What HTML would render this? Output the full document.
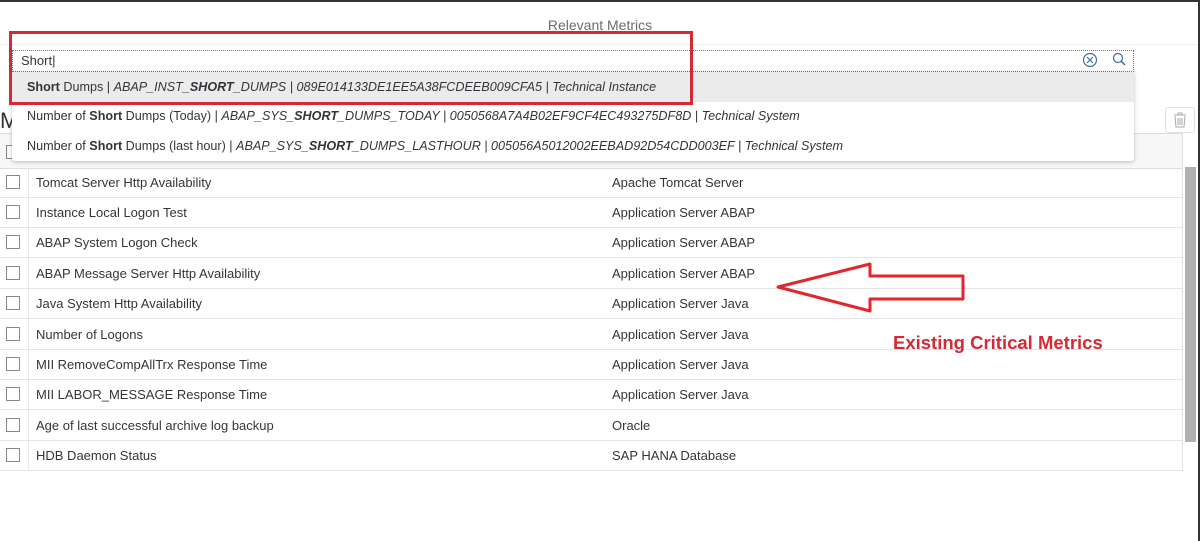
<!DOCTYPE html>
<html><head><style>
body{margin:0;width:1200px;height:541px;background:#fff;position:relative;overflow:hidden;font-family:"Liberation Sans",Arial,sans-serif;color:#32363a;}
.a{position:absolute;}
.row{position:absolute;left:0;width:1182px;height:30px;border-bottom:1px solid #e5e5e5;font-size:13px;}
.row .cb{position:absolute;left:6px;top:8px;width:12px;height:12px;border:1px solid #888;background:#fff;}
.row .t1{position:absolute;left:36px;top:8px;}
.row .t2{position:absolute;left:612px;top:8px;}
.sg{position:absolute;left:12px;width:1122px;height:30px;font-size:12.6px;line-height:30px;}
.sg span{position:absolute;left:15px;white-space:nowrap;}
i{font-style:italic}
</style></head><body>
<div class="a" style="left:0;top:0;width:1200px;height:2px;background:#333"></div>
<div class="a" style="right:0;top:0;width:2px;height:541px;background:#333"></div>
<div class="a" style="left:0;top:17px;width:1200px;text-align:center;font-size:14px;color:#6a6d70;">Relevant Metrics</div>
<div class="a" style="left:0;top:44px;width:1196px;height:1px;background:#eee"></div>
<div class="a" style="left:12px;top:50px;width:1120px;height:20px;border:1px dotted #777;background:#fff;font-size:13px;line-height:20px;"><span style="padding-left:8px">Short|</span></div>
<svg class="a" style="left:1080px;top:52px" width="60" height="18"><circle cx="10" cy="8" r="6.5" fill="none" stroke="#3a6ea5" stroke-width="1.2"/><path d="M7 5L13 11M13 5L7 11" stroke="#3a6ea5" stroke-width="1.2"/><circle cx="38" cy="6" r="4.5" fill="none" stroke="#3a6ea5" stroke-width="1.2"/><path d="M41 9L45 13" stroke="#3a6ea5" stroke-width="1.5"/></svg>
<div class="a" style="left:0;top:108px;font-size:22px;color:#333">M</div>
<div class="a" style="left:1165px;top:107px;width:28px;height:24px;border:1px solid #e0e0e0;border-radius:3px;"><svg width="28" height="24"><path d="M8 7H20M12 7V5H16V7M9 8L10 19H18L19 8M12 10V17M14 10V17M16 10V17" fill="none" stroke="#aaa" stroke-width="1"/></svg></div>
<div class="a" style="left:0;top:133px;width:1182px;height:34px;background:#f7f7f7;border-top:1px solid #ddd;border-bottom:1px solid #ddd"></div>
<div class="a" style="left:6px;top:145px;width:12px;height:12px;border:1px solid #888;background:#fff"></div>
<div class="a" style="left:1182px;top:133px;width:1px;height:338px;background:#e0e0e0"></div>
<div class="a" style="left:28px;top:167px;width:1px;height:304px;background:#e8e8e8"></div>
<div class="a" style="left:1185px;top:167px;width:11px;height:275px;background:#b0b0b0"></div>
<div class="row" style="top:167px"><div class="cb"></div><div class="t1">Tomcat Server Http Availability</div><div class="t2">Apache Tomcat Server</div></div>
<div class="row" style="top:197px"><div class="cb"></div><div class="t1">Instance Local Logon Test</div><div class="t2">Application Server ABAP</div></div>
<div class="row" style="top:227px"><div class="cb"></div><div class="t1">ABAP System Logon Check</div><div class="t2">Application Server ABAP</div></div>
<div class="row" style="top:258px"><div class="cb"></div><div class="t1">ABAP Message Server Http Availability</div><div class="t2">Application Server ABAP</div></div>
<div class="row" style="top:288px"><div class="cb"></div><div class="t1">Java System Http Availability</div><div class="t2">Application Server Java</div></div>
<div class="row" style="top:319px"><div class="cb"></div><div class="t1">Number of Logons</div><div class="t2">Application Server Java</div></div>
<div class="row" style="top:349px"><div class="cb"></div><div class="t1">MII RemoveCompAllTrx Response Time</div><div class="t2">Application Server Java</div></div>
<div class="row" style="top:379px"><div class="cb"></div><div class="t1">MII LABOR_MESSAGE Response Time</div><div class="t2">Application Server Java</div></div>
<div class="row" style="top:410px"><div class="cb"></div><div class="t1">Age of last successful archive log backup</div><div class="t2">Oracle</div></div>
<div class="row" style="top:440px"><div class="cb"></div><div class="t1">HDB Daemon Status</div><div class="t2">SAP HANA Database</div></div>
<div class="a" style="left:12px;top:72px;width:1122px;height:89px;background:#fff;box-shadow:0 1px 4px rgba(0,0,0,.25);border-radius:0 0 3px 3px"></div>
<div class="sg" style="top:72px;background:#ebebeb"><span><b>Short</b> Dumps | <i>ABAP_INST_<b>SHORT</b>_DUMPS | 089E014133DE1EE5A38FCDEEB009CFA5 | Technical Instance</i></span></div>
<div class="sg" style="top:101px"><span>Number of <b>Short</b> Dumps (Today) | <i>ABAP_SYS_<b>SHORT</b>_DUMPS_TODAY | 0050568A7A4B02EF9CF4EC493275DF8D | Technical System</i></span></div>
<div class="sg" style="top:131px"><span>Number of <b>Short</b> Dumps (last hour) | <i>ABAP_SYS_<b>SHORT</b>_DUMPS_LASTHOUR | 005056A5012002EEBAD92D54CDD003EF | Technical System</i></span></div>
<div class="a" style="left:9px;top:31px;width:678px;height:68px;border:3px solid #d42a33"></div>
<svg class="a" style="left:0;top:0" width="1200" height="541"><path d="M778 287L870 264V276H963V299H870V311Z" fill="none" stroke="#e0262f" stroke-width="3" stroke-linejoin="round"/></svg>
<div class="a" style="left:893px;top:332px;font-size:18.5px;font-weight:bold;color:#d42a33;">Existing Critical Metrics</div>
</body></html>
